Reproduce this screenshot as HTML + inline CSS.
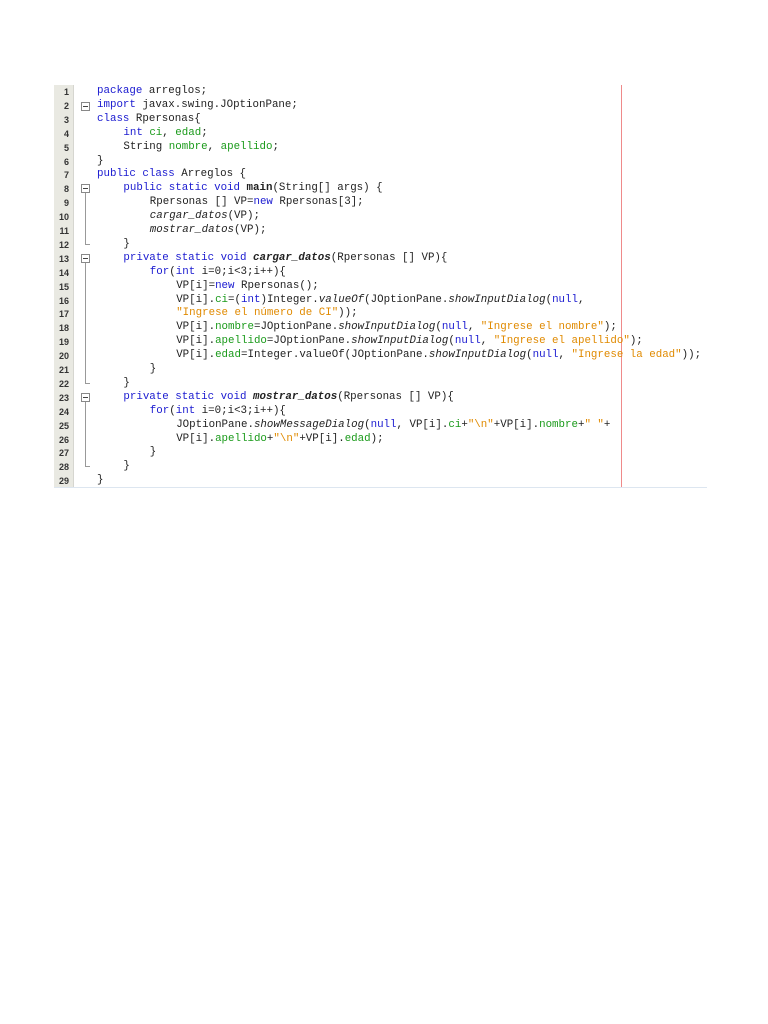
<!DOCTYPE html>
<html><head><meta charset="utf-8"><style>
html,body{margin:0;padding:0;background:#fff;width:768px;height:1024px;overflow:hidden}
#ed{position:absolute;left:54px;top:85px;width:653px;height:402px;border-bottom:1px solid #dde6f0}
#gut{position:absolute;left:0;top:0;width:19px;height:402px;background:#e9e9e2;border-right:1px solid #d6d6d0}
#red{position:absolute;left:567px;top:0;width:1px;height:402px;background:#ef8a8a}
.ln{position:absolute;left:0;width:15px;text-align:right;font:bold 9px "Liberation Sans",sans-serif;color:#333}
.c{position:absolute;white-space:pre;font:10.8px "Liberation Mono",monospace;color:#222}
.k{color:#1a1ad0}.g{color:#1a9a1a}.s{color:#e08a00}.i{font-style:italic}.b{font-weight:bold}
.fold{position:absolute;left:27px;width:7px;height:7px;border:1px solid #888;background:#fff}
.fold:after{content:"";position:absolute;left:1px;top:3px;width:5px;height:1px;background:#444}
.vl{position:absolute;left:31px;width:1px;background:#999}
.tk{position:absolute;left:31px;width:5px;height:1px;background:#999}
</style></head><body>
<div id="ed">
<div id="gut"></div>
<div id="red"></div>
<div class="fold" style="top:17px"></div>
<div class="fold" style="top:99px"></div><div class="vl" style="top:108px;height:51px"></div><div class="tk" style="top:159px"></div>
<div class="fold" style="top:169px"></div><div class="vl" style="top:178px;height:120px"></div><div class="tk" style="top:298px"></div>
<div class="fold" style="top:308px"></div><div class="vl" style="top:317px;height:64px"></div><div class="tk" style="top:381px"></div>
<div id="lines"></div>
</div>
<script>
var L=[
[0,'<span class="k">package</span> arreglos;'],
[0,'<span class="k">import</span> javax.swing.JOptionPane;'],
[0,'<span class="k">class</span> Rpersonas{'],
[1,'<span class="k">int</span> <span class="g">ci</span>, <span class="g">edad</span>;'],
[1,'String <span class="g">nombre</span>, <span class="g">apellido</span>;'],
[0,'}'],
[0,'<span class="k">public class</span> Arreglos {'],
[1,'<span class="k">public static void</span> <span class="b">main</span>(String[] args) {'],
[2,'Rpersonas [] VP=<span class="k">new</span> Rpersonas[3];'],
[2,'<span class="i">cargar_datos</span>(VP);'],
[2,'<span class="i">mostrar_datos</span>(VP);'],
[1,'}'],
[1,'<span class="k">private static void</span> <span class="i b">cargar_datos</span>(Rpersonas [] VP){'],
[2,'<span class="k">for</span>(<span class="k">int</span> i=0;i&lt;3;i++){'],
[3,'VP[i]=<span class="k">new</span> Rpersonas();'],
[3,'VP[i].<span class="g">ci</span>=(<span class="k">int</span>)Integer.<span class="i">valueOf</span>(JOptionPane.<span class="i">showInputDialog</span>(<span class="k">null</span>,'],
[3,'<span class="s">"Ingrese el número de CI"</span>));'],
[3,'VP[i].<span class="g">nombre</span>=JOptionPane.<span class="i">showInputDialog</span>(<span class="k">null</span>, <span class="s">"Ingrese el nombre"</span>);'],
[3,'VP[i].<span class="g">apellido</span>=JOptionPane.<span class="i">showInputDialog</span>(<span class="k">null</span>, <span class="s">"Ingrese el apellido"</span>);'],
[3,'VP[i].<span class="g">edad</span>=Integer.valueOf(JOptionPane.<span class="i">showInputDialog</span>(<span class="k">null</span>, <span class="s">"Ingrese la edad"</span>));'],
[2,'}'],
[1,'}'],
[1,'<span class="k">private static void</span> <span class="i b">mostrar_datos</span>(Rpersonas [] VP){'],
[2,'<span class="k">for</span>(<span class="k">int</span> i=0;i&lt;3;i++){'],
[3,'JOptionPane.<span class="i">showMessageDialog</span>(<span class="k">null</span>, VP[i].<span class="g">ci</span>+<span class="s">"\\n"</span>+VP[i].<span class="g">nombre</span>+<span class="s">" "</span>+'],
[3,'VP[i].<span class="g">apellido</span>+<span class="s">"\\n"</span>+VP[i].<span class="g">edad</span>);'],
[2,'}'],
[1,'}'],
[0,'}']];
var h='';
for(var n=0;n<L.length;n++){var y=n*13.9;
h+='<div class="ln" style="top:'+(y+2)+'px">'+(n+1)+'</div>';
h+='<div class="c" style="top:'+y+'px;left:'+(43+L[n][0]*26.4)+'px">'+L[n][1]+'</div>';}
document.getElementById('lines').innerHTML=h;
</script>
</body></html>
